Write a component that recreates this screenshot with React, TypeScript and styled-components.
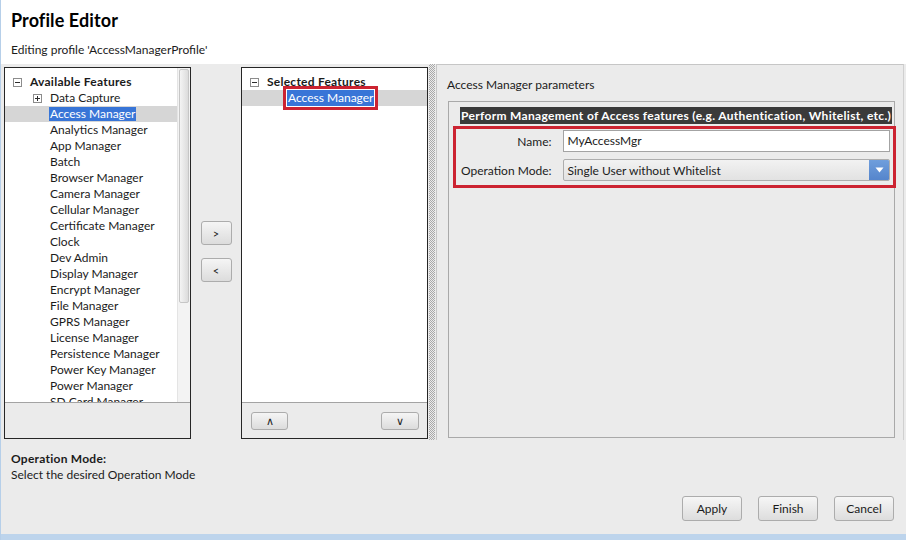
import React from "react";
import styled, { createGlobalStyle } from "styled-components";

const UI_FONT = `"Lato", "Noto Sans", "Open Sans", sans-serif`;

const GlobalStyle = createGlobalStyle`
  html, body {
    margin: 0;
    padding: 0;
  }
  body {
    font-family: ${UI_FONT};
    font-size: 12px;
    color: #1b1b1b;
    background: #ebebeb;
  }
  * {
    box-sizing: border-box;
  }
`;

const Window = styled.div`
  width: 906px;
  height: 540px;
  display: flex;
  flex-direction: column;
  background: #ebebeb;
  border-left: 1px solid #b6cfe9;
  overflow: hidden;
`;

/* ---------- header ---------- */

const Header = styled.header`
  height: 64px;
  background: #ffffff;
  padding: 9px 0 0 10px;
  flex-shrink: 0;
`;

const Title = styled.h1`
  margin: 0;
  font-size: 18px;
  line-height: 22px;
  font-weight: 700;
  letter-spacing: 0.1px;
  color: #000;
`;

const Subtitle = styled.div`
  margin-top: 11px;
  line-height: 16px;
  color: #1b1b1b;
`;

/* ---------- main area ---------- */

const Main = styled.div`
  display: flex;
  height: 376px;
  padding-left: 3px;
  flex-shrink: 0;
`;

const ListPanel = styled.section`
  width: 187px;
  height: 372px;
  margin-top: 3px;
  border: 1px solid #262626;
  display: flex;
  flex-direction: column;
  background: #ebebeb;
`;

const ListArea = styled.div`
  flex: 1;
  display: flex;
  background: #ffffff;
  border-bottom: 1px solid #a3a3a3;
  overflow: hidden;
`;

const Tree = styled.ul`
  flex: 1;
  list-style: none;
  margin: 0;
  padding: 6px 0 0 0;
  overflow: hidden;
`;

const Row = styled.li<{ $indent: number; $selected?: boolean }>`
  height: 16px;
  display: flex;
  align-items: center;
  padding-left: ${(p) => p.$indent}px;
  white-space: nowrap;
  background: ${(p) => (p.$selected ? "#d6d6d6" : "transparent")};
`;

const Expander = styled.span<{ $gap: number }>`
  width: 9px;
  height: 9px;
  border: 1px solid #8c8c8c;
  background: #fff;
  margin-right: ${(p) => p.$gap}px;
  position: relative;
  flex-shrink: 0;

  &::before {
    content: "";
    position: absolute;
    left: 1px;
    right: 1px;
    top: 3px;
    height: 1px;
    background: #2c2c2c;
  }
`;

const PlusExpander = styled(Expander)`
  &::after {
    content: "";
    position: absolute;
    top: 1px;
    bottom: 1px;
    left: 3px;
    width: 1px;
    background: #2c2c2c;
  }
`;

const RowLabel = styled.span<{ $bold?: boolean; $highlight?: boolean; $marked?: boolean }>`
  font-weight: ${(p) => (p.$bold ? 700 : 400)};
  letter-spacing: ${(p) => (p.$bold ? "0.25px" : "0")};
  line-height: ${(p) => (p.$marked ? "16px" : "14px")};
  padding: 0 1px;
  color: ${(p) => (p.$highlight ? "#ffffff" : "#1b1b1b")};
  background: ${(p) => (p.$highlight ? "#3875d7" : "transparent")};
  box-shadow: ${(p) =>
    p.$marked ? "0 0 0 1px #ffffff, 0 0 0 4px #cc2331" : "none"};
`;

const ScrollTrack = styled.div`
  width: 13px;
  background: #f3f3f3;
  border-left: 1px solid #e4e4e4;
  padding: 1px 1px 0 1px;
`;

const ScrollThumb = styled.div`
  height: 234px;
  border: 1px solid #c6c6c6;
  border-radius: 2px;
  background: linear-gradient(to right, #f4f4f4, #dcdcdc);
`;

const PanelFooter = styled.div`
  height: 35px;
  flex-shrink: 0;
  display: flex;
  align-items: center;
  justify-content: space-between;
  padding: 0 8px 0 9px;
`;

const TransferColumn = styled.div`
  width: 50px;
  display: flex;
  flex-direction: column;
  align-items: center;
  padding-top: 157px;
  gap: 13px;
`;

const GrayButton = styled.button<{ $w: number; $h: number }>`
  width: ${(p) => p.$w}px;
  height: ${(p) => p.$h}px;
  padding: 0;
  font-family: ${UI_FONT};
  font-size: 11px;
  color: #222;
  border: 1px solid #acacac;
  border-radius: 3px;
  background: linear-gradient(to bottom, #f5f5f5, #dcdcdc);
  display: flex;
  align-items: center;
  justify-content: center;
`;

const Sash = styled.div`
  width: 6px;
  margin: 0 1px;
  background: repeating-conic-gradient(#a9a9a9 0 25%, #ebebeb 0 50%) 0 0 / 2px 2px;
`;

/* ---------- parameters panel ---------- */

const ParamPanel = styled.section`
  flex: 1;
  margin-right: 2px;
  border-left: 1px solid #c6c6c6;
  border-top: 1px solid #c6c6c6;
  border-right: 1px solid #d0d0d0;
  padding: 12px 8px 2px 10px;
  display: flex;
  flex-direction: column;
`;

const ParamCaption = styled.div`
  line-height: 16px;
  height: 16px;
`;

const GroupBox = styled.div`
  flex: 1;
  margin: 8px 0 0 1px;
  border: 1px solid #a9a9a9;
  padding: 5px 0 0 0;
  display: flex;
  flex-direction: column;
  align-items: flex-start;
`;

const GroupHeading = styled.div`
  margin-left: 11px;
  padding: 0 1px;
  height: 17px;
  line-height: 17px;
  font-weight: 700;
  letter-spacing: 0.32px;
  white-space: nowrap;
  color: #ffffff;
  background: #3a3a3a;
`;

const MarkedBox = styled.div`
  align-self: stretch;
  margin: 2px -2px 0 4px;
  border: 3px solid #cc2331;
  padding: 1px 3px 4px 5px;
  display: grid;
  grid-template-columns: auto 1fr;
  column-gap: 11px;
  row-gap: 7px;
  align-items: center;
`;

const FieldLabel = styled.label`
  justify-self: end;
  white-space: nowrap;
`;

const TextInput = styled.div`
  height: 22px;
  border: 1px solid #a3a3a3;
  background: #ffffff;
  padding-left: 4px;
  line-height: 20px;
`;

const Select = styled.div`
  height: 22px;
  border: 1px solid #adadad;
  border-radius: 2px;
  background: linear-gradient(to bottom, #f2f2f2, #e2e2e2);
  display: flex;
  align-items: center;
  padding-left: 4px;
`;

const SelectValue = styled.span`
  flex: 1;
`;

const SelectArrow = styled.span`
  width: 20px;
  height: 20px;
  background: linear-gradient(to bottom, #6f9edc, #5585cc);
  border-radius: 0 1px 1px 0;
  display: flex;
  align-items: center;
  justify-content: center;
`;

/* ---------- bottom ---------- */

const Bottom = styled.div`
  flex: 1;
  display: flex;
  flex-direction: column;
  padding: 11px 12px 0 10px;
`;

const Help = styled.div`
  line-height: 16px;
`;

const HelpTitle = styled.div`
  font-weight: 700;
  letter-spacing: 0.25px;
`;

const Actions = styled.div`
  margin-top: 13px;
  display: flex;
  justify-content: flex-end;
  gap: 16px;
`;

const ActionButton = styled.button`
  width: 60px;
  height: 25px;
  font-family: ${UI_FONT};
  font-size: 12px;
  color: #1b1b1b;
  border: 1px solid #acacac;
  border-radius: 3px;
  background: linear-gradient(to bottom, #f6f6f6, #dddddd);
  padding: 0;
`;

const StatusStrip = styled.div`
  height: 6px;
  flex-shrink: 0;
  background: #bdd4ec;
`;

const available = [
  "Analytics Manager",
  "App Manager",
  "Batch",
  "Browser Manager",
  "Camera Manager",
  "Cellular Manager",
  "Certificate Manager",
  "Clock",
  "Dev Admin",
  "Display Manager",
  "Encrypt Manager",
  "File Manager",
  "GPRS Manager",
  "License Manager",
  "Persistence Manager",
  "Power Key Manager",
  "Power Manager",
  "SD Card Manager",
];

export default function App() {
  return (
    <>
      <GlobalStyle />
      <Window>
        <Header>
          <Title>Profile Editor</Title>
          <Subtitle>Editing profile 'AccessManagerProfile'</Subtitle>
        </Header>

        <Main>
          <ListPanel>
            <ListArea>
              <Tree>
                <Row $indent={8}>
                  <Expander $gap={7} />
                  <RowLabel $bold>Available Features</RowLabel>
                </Row>
                <Row $indent={28}>
                  <PlusExpander $gap={7} />
                  <RowLabel>Data Capture</RowLabel>
                </Row>
                <Row $indent={44} $selected>
                  <RowLabel $highlight>Access Manager</RowLabel>
                </Row>
                {available.map((name) => (
                  <Row key={name} $indent={44}>
                    <RowLabel>{name}</RowLabel>
                  </Row>
                ))}
              </Tree>
              <ScrollTrack>
                <ScrollThumb />
              </ScrollTrack>
            </ListArea>
            <PanelFooter />
          </ListPanel>

          <TransferColumn>
            <GrayButton $w={31} $h={24}>&gt;</GrayButton>
            <GrayButton $w={31} $h={24}>&lt;</GrayButton>
          </TransferColumn>

          <ListPanel>
            <ListArea>
              <Tree>
                <Row $indent={8}>
                  <Expander $gap={7} />
                  <RowLabel $bold>Selected Features</RowLabel>
                </Row>
                <Row $indent={45} $selected>
                  <RowLabel $highlight $marked>
                    Access Manager
                  </RowLabel>
                </Row>
              </Tree>
            </ListArea>
            <PanelFooter>
              <GrayButton $w={37} $h={18}>&#8743;</GrayButton>
              <GrayButton $w={38} $h={18}>&#8744;</GrayButton>
            </PanelFooter>
          </ListPanel>

          <Sash />

          <ParamPanel>
            <ParamCaption>Access Manager parameters</ParamCaption>
            <GroupBox>
              <GroupHeading>
                Perform Management of Access features (e.g. Authentication, Whitelist, etc.)
              </GroupHeading>
              <MarkedBox>
                <FieldLabel>Name:</FieldLabel>
                <TextInput>MyAccessMgr</TextInput>
                <FieldLabel>Operation Mode:</FieldLabel>
                <Select>
                  <SelectValue>Single User without Whitelist</SelectValue>
                  <SelectArrow>
                    <svg width="9" height="6" viewBox="0 0 9 6">
                      <path d="M0.5 0.5 L8.5 0.5 L4.5 5.5 Z" fill="#ffffff" />
                    </svg>
                  </SelectArrow>
                </Select>
              </MarkedBox>
            </GroupBox>
          </ParamPanel>
        </Main>

        <Bottom>
          <Help>
            <HelpTitle>Operation Mode:</HelpTitle>
            <div>Select the desired Operation Mode</div>
          </Help>
          <Actions>
            <ActionButton>Apply</ActionButton>
            <ActionButton>Finish</ActionButton>
            <ActionButton>Cancel</ActionButton>
          </Actions>
        </Bottom>
        <StatusStrip />
      </Window>
    </>
  );
}
